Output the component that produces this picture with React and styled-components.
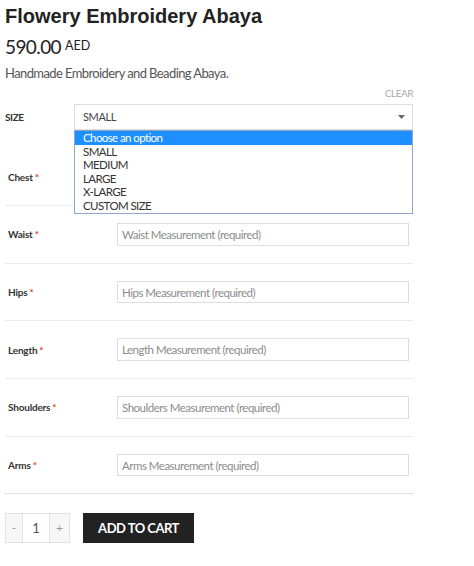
import React from "react";
import styled, { createGlobalStyle } from "styled-components";

const Global = createGlobalStyle`
  html, body { margin: 0; padding: 0; background: #fff; }
  body { font-family: Lato, "Open Sans", sans-serif; color: #333; }
  * { box-sizing: border-box; }
`;

const Page = styled.div`
  width: 413px;
  padding: 4px 0 0 5px;
`;

const Title = styled.h1`
  margin: 0;
  font-family: "Liberation Sans", Arial, sans-serif;
  font-weight: 700;
  font-size: 20px;
  line-height: 24px;
  color: #222;
`;

const Price = styled.div`
  margin-top: 6px;
  font-size: 19px;
  letter-spacing: -0.6px;
  line-height: 24px;
  color: #222;
`;

const Currency = styled.span`
  font-size: 12.5px;
  letter-spacing: 0;
  margin-left: 4px;
  vertical-align: 4px;
`;

const Description = styled.p`
  margin: 6.4px 0 0;
  font-size: 13px;
  letter-spacing: -0.6px;
  line-height: 17px;
  color: #555;
`;

const ClearRow = styled.div`
  margin-top: 4.6px;
  text-align: right;
  font-size: 10px;
  letter-spacing: -0.5px;
  line-height: 12px;
  color: #aaa;
`;

const SizeRow = styled.div`
  margin-top: 5px;
  display: flex;
  align-items: center;
`;

const SizeLabel = styled.div`
  width: 69px;
  font-size: 10px;
  letter-spacing: -0.4px;
  font-weight: 700;
  color: #333;
`;

const SelectWrap = styled.div`
  position: relative;
  flex: 1;
`;

const SelectBox = styled.div`
  height: 26px;
  border: 1px solid #ddd;
  display: flex;
  align-items: center;
  justify-content: space-between;
  padding: 0 7px 0 8px;
  font-size: 11px;
  letter-spacing: -0.4px;
  color: #444;
`;

const OptionList = styled.div`
  position: absolute;
  top: 100%;
  left: 0;
  right: 0;
  background: #fff;
  border: 1px solid #8fa5c9;
  z-index: 5;
`;

const Option = styled.div`
  height: 13.6px;
  line-height: 13.6px;
  padding-left: 8px;
  font-size: 11.5px;
  letter-spacing: -0.6px;
  color: ${(p) => (p.$active ? "#fff" : "#333")};
  background: ${(p) => (p.$active ? "#1e8fff" : "transparent")};
`;

const Table = styled.div`
  margin-top: 18.3px;
`;

const Row = styled.div`
  display: flex;
  align-items: center;
  padding: 17px 0;
  border-bottom: 1px ${(p) => (p.$last ? "dotted #ccc" : "solid #ececec")};
`;

const Label = styled.div`
  width: 107px;
  padding-left: 3px;
  font-size: 10px;
  letter-spacing: -0.2px;
  font-weight: 700;
  color: #333;
`;

const Req = styled.span`
  color: #e2401c;
  margin-left: 2px;
`;

const InputCell = styled.div`
  flex: 1;
  padding: 0 4px 0 5px;
`;

const Input = styled.input`
  display: block;
  width: 100%;
  height: 22.7px;
  border: 1px solid #ddd;
  padding: 0 4px;
  font-family: Lato, sans-serif;
  font-size: 11.5px;
  letter-spacing: -0.5px;
  color: #333;
  outline: none;
  &::placeholder { color: #8c8c8c; }
`;

const CartRow = styled.div`
  margin-top: 18.5px;
  display: flex;
  align-items: center;
  gap: 13px;
`;

const Qty = styled.div`
  display: flex;
  height: 30px;
  border: 1px solid #e3e3e3;
`;

const QtyBtn = styled.div`
  width: ${(p) => p.$w}px;
  display: flex;
  align-items: center;
  justify-content: center;
  background: #f7f7f7;
  color: #999;
  font-size: 12px;
`;

const QtyValue = styled.div`
  width: 28px;
  display: flex;
  align-items: center;
  justify-content: center;
  background: #fff;
  border-left: 1px solid #e3e3e3;
  border-right: 1px solid #e3e3e3;
  font-size: 13px;
  color: #555;
`;

const CartButton = styled.button`
  height: 30px;
  width: 111px;
  border: none;
  background: #222;
  color: #fff;
  font-family: Lato, sans-serif;
  font-weight: 700;
  font-size: 13px;
  letter-spacing: -0.5px;
  padding: 0;
  cursor: pointer;
`;

const fields = ["Chest", "Waist", "Hips", "Length", "Shoulders", "Arms"];
const options = ["Choose an option", "SMALL", "MEDIUM", "LARGE", "X-LARGE", "CUSTOM SIZE"];

export default function App() {
  return (
    <>
      <Global />
      <Page>
        <Title>Flowery Embroidery Abaya</Title>
        <Price>
          590.00<Currency>AED</Currency>
        </Price>
        <Description>Handmade Embroidery and Beading Abaya.</Description>
        <ClearRow>CLEAR</ClearRow>
        <SizeRow>
          <SizeLabel>SIZE</SizeLabel>
          <SelectWrap>
            <SelectBox>
              <span>SMALL</span>
              <svg width="7" height="4" viewBox="0 0 7 4">
                <polygon points="0,0 7,0 3.5,4" fill="#666" />
              </svg>
            </SelectBox>
            <OptionList>
              {options.map((o, i) => (
                <Option key={o} $active={i === 0}>{o}</Option>
              ))}
            </OptionList>
          </SelectWrap>
        </SizeRow>
        <Table>
          {fields.map((f, i) => (
            <Row key={f} $last={i === fields.length - 1}>
              <Label>
                {f}
                <Req>*</Req>
              </Label>
              <InputCell>
                <Input placeholder={`${f} Measurement (required)`} />
              </InputCell>
            </Row>
          ))}
        </Table>
        <CartRow>
          <Qty>
            <QtyBtn $w={16}>-</QtyBtn>
            <QtyValue>1</QtyValue>
            <QtyBtn $w={19}>+</QtyBtn>
          </Qty>
          <CartButton>ADD TO CART</CartButton>
        </CartRow>
      </Page>
    </>
  );
}
